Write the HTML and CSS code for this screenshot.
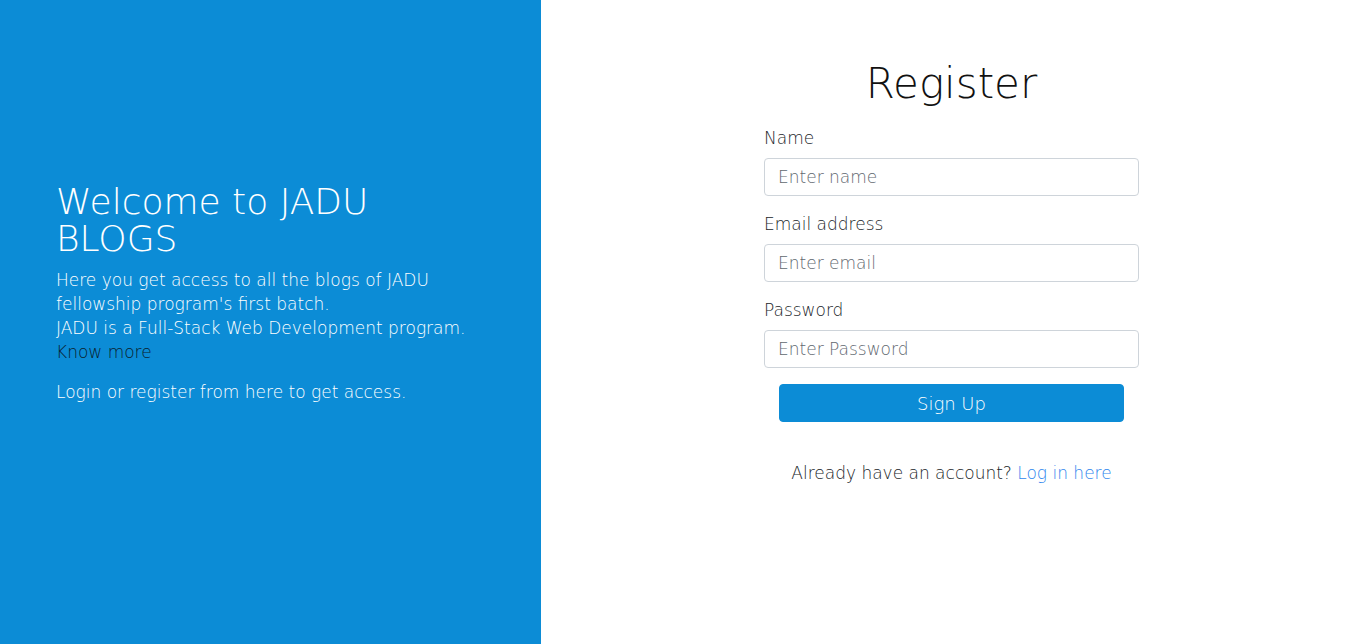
FILE: index.html
```html
<!DOCTYPE html>
<html lang="en">
<head>
<meta charset="utf-8">
<title>Register - JADU Blogs</title>
<link rel="stylesheet" href="styles.css">
</head>
<body>
<div class="page">
  <aside class="intro">
    <div class="intro-inner">
      <h1 class="intro-title">Welcome to JADU BLOGS</h1>
      <p class="intro-text">Here you get access to all the blogs of JADU fellowship program's first batch.<br>JADU is a Full-Stack Web Development program.<br><a class="know-more" href="#">Know more</a></p>
      <p class="intro-text">Login or register from here to get access.</p>
    </div>
  </aside>
  <main class="form-side">
    <form class="register">
      <h2 class="register-title">Register</h2>
      <div class="field">
        <label class="field-label" for="name">Name</label>
        <input class="field-input" id="name" type="text" placeholder="Enter name">
      </div>
      <div class="field">
        <label class="field-label" for="email">Email address</label>
        <input class="field-input" id="email" type="email" placeholder="Enter email">
      </div>
      <div class="field">
        <label class="field-label" for="password">Password</label>
        <input class="field-input" id="password" type="password" placeholder="Enter Password">
      </div>
      <button class="submit" type="button">Sign Up</button>
      <p class="switch">Already have an account? <a class="switch-link" href="#">Log in here</a></p>
    </form>
  </main>
</div>
</body>
</html>
```
FILE: styles.css
```css
* { box-sizing: border-box; }
html, body { margin: 0; padding: 0; height: 100%; }
body {
  font-family: "DejaVu Sans", "Open Sans", sans-serif;
  font-weight: 200;
  color: #212529;
  background: #fff;
}
.page {
  display: grid;
  grid-template-columns: 541px 1fr;
  height: 644px;
}
.intro {
  background: #0c8cd6;
  color: #fff;
  padding: 183px 56px 0 56px;
}
.intro-inner { width: 430px; }
.intro-title {
  font-weight: 200;
  font-size: 36px;
  line-height: 37px;
  margin: 0 0 11px 0;
}
.intro-text {
  font-size: 17px;
  line-height: 24px;
  margin: 0 0 16px 0;
}
.know-more { color: #0a1e2e; text-decoration: none; }
.form-side {
  display: flex;
  justify-content: center;
  padding: 56px 0 0 2px;
}
.register { width: 375px; }
.register-title {
  font-weight: 200;
  font-size: 42px;
  line-height: 56px;
  text-align: center;
  margin: 0 0 14px 0;
  color: #111;
}
.field { margin-bottom: 16px; }
.field-label {
  display: block;
  font-size: 17px;
  line-height: 24px;
  margin-bottom: 8px;
  color: #212529;
}
.field-input {
  display: block;
  width: 100%;
  height: 38px;
  border: 1px solid #ced4da;
  border-radius: 4px;
  padding: 0 13px;
  font-family: inherit;
  font-weight: 200;
  font-size: 17px;
  color: #495057;
}
.field-input::placeholder { color: #5f6870; }
.submit {
  display: block;
  width: 345px;
  height: 38px;
  margin: 16px auto 0;
  background: #0c8cd6;
  border: 1px solid #0c8cd6;
  border-radius: 4px;
  color: #fff;
  font-family: inherit;
  font-weight: 200;
  font-size: 18px;
}
.switch {
  text-align: center;
  font-size: 17px;
  line-height: 24px;
  margin: 39px 0 0 0;
  color: #212529;
}
.switch-link { color: #2f86ee; text-decoration: none; }
```
